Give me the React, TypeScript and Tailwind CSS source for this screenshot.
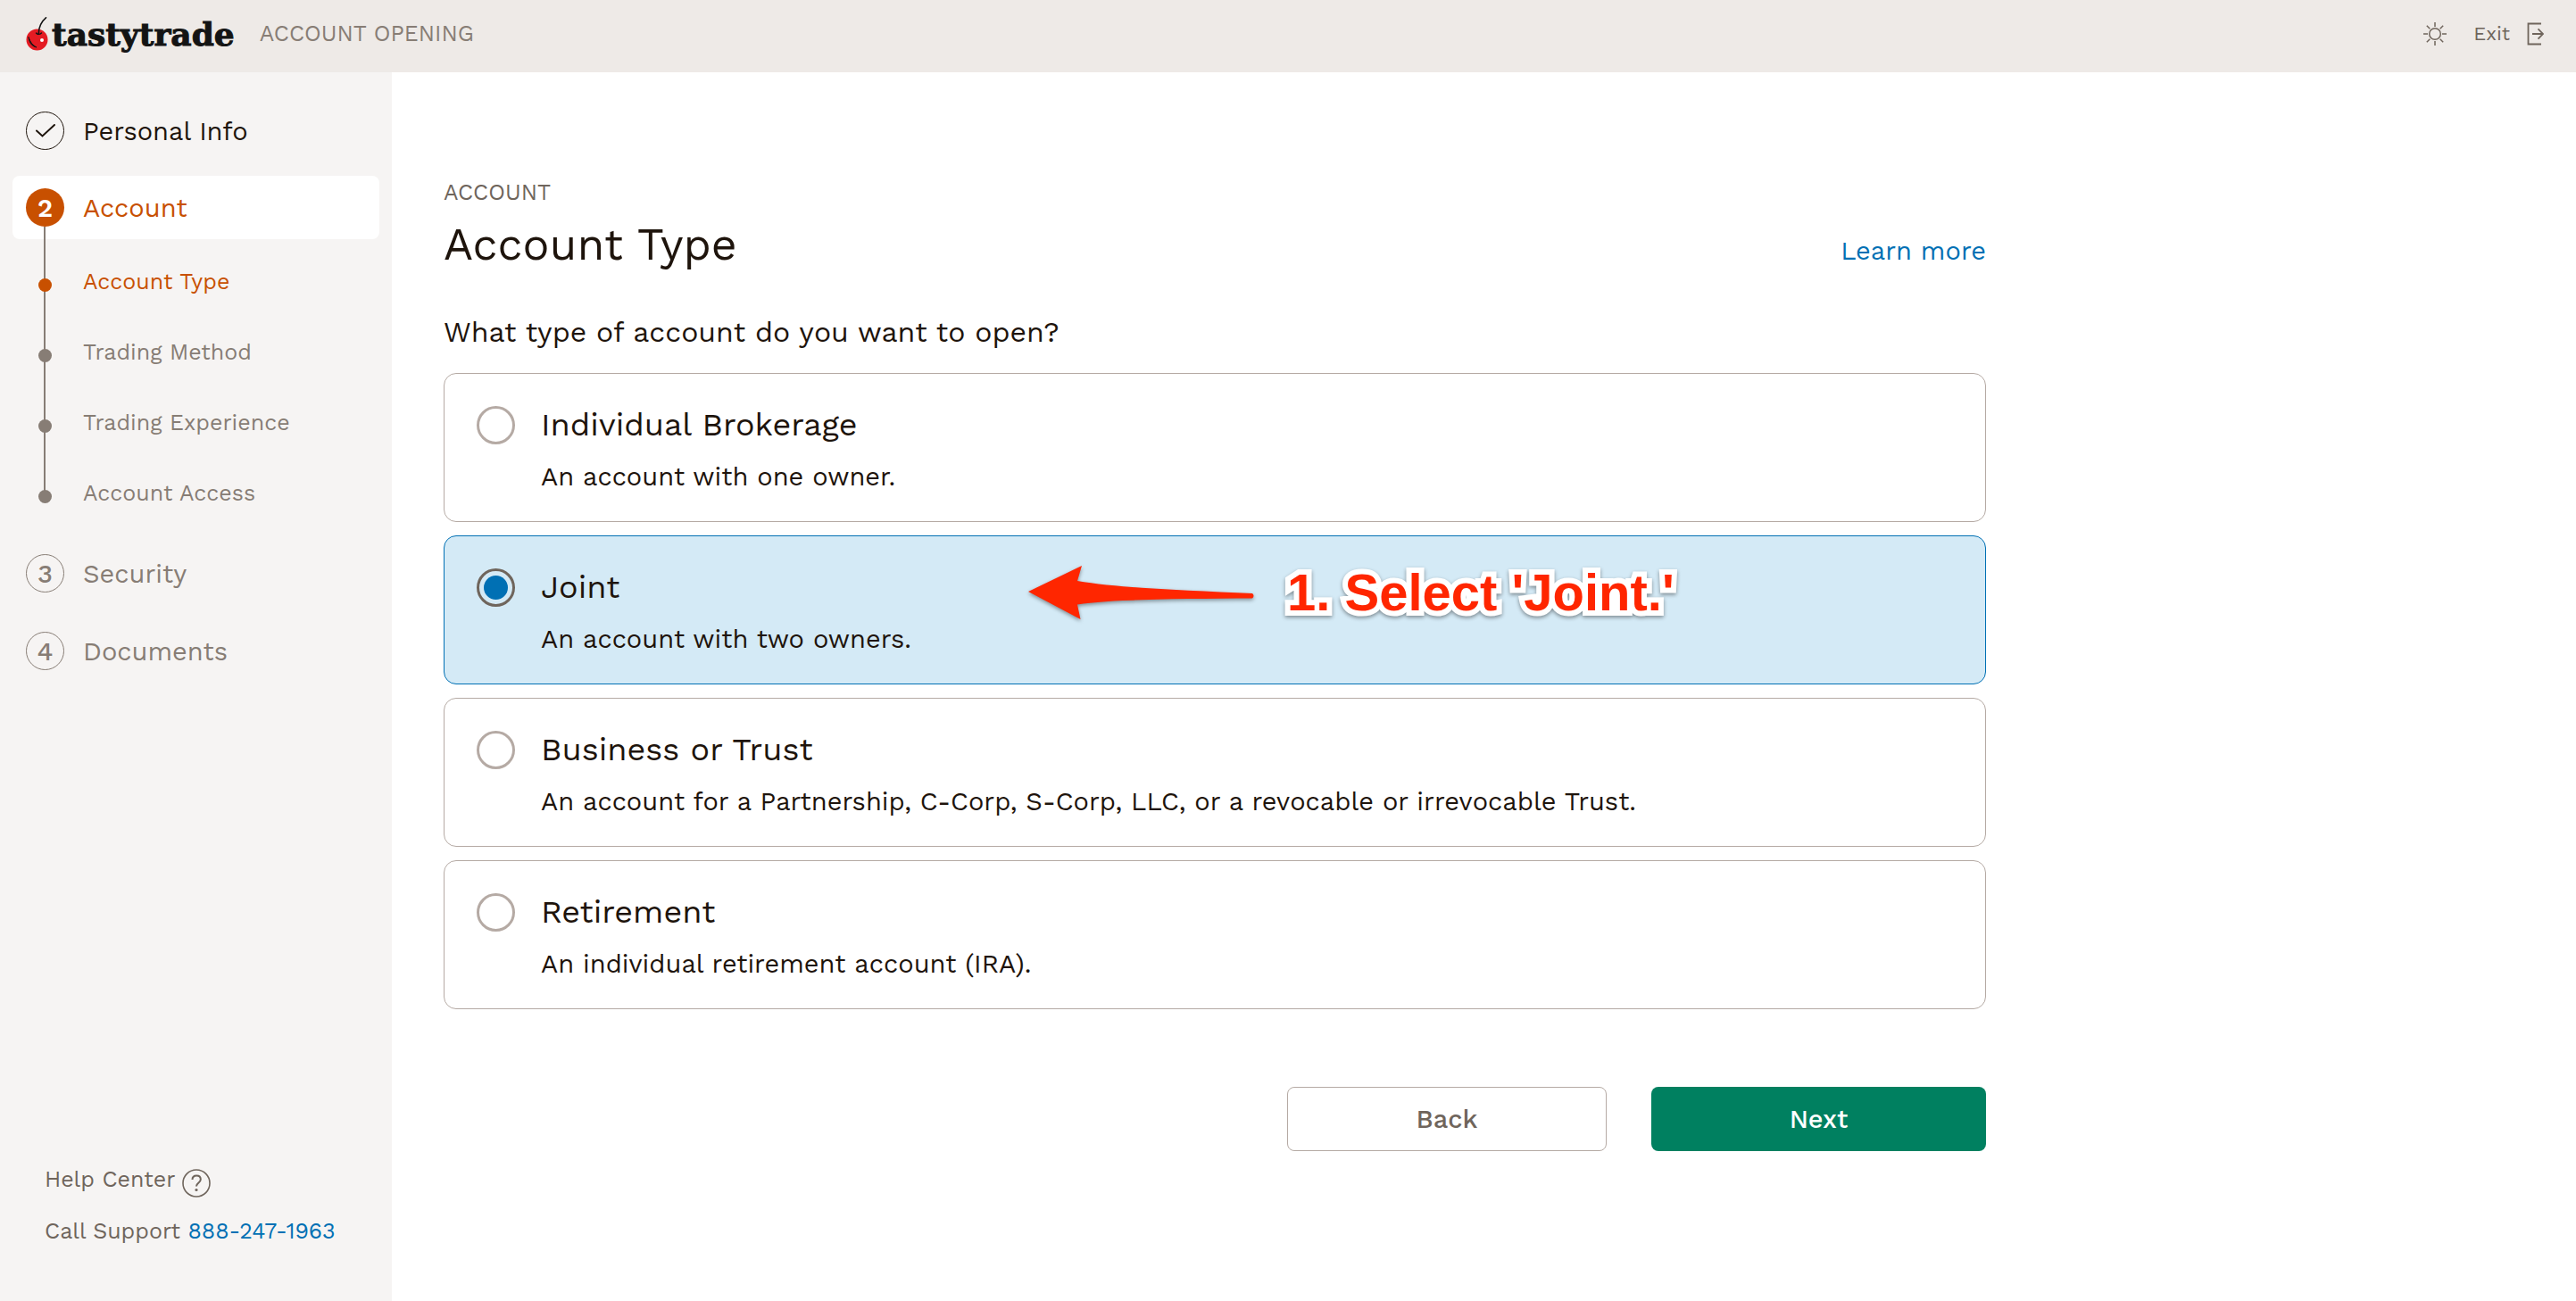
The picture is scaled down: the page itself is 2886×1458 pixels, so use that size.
import { useState } from "react";
import clsx from "clsx";

const accountTypes = [
  { id: "individual", title: "Individual Brokerage", description: "An account with one owner." },
  { id: "joint", title: "Joint", description: "An account with two owners." },
  {
    id: "business",
    title: "Business or Trust",
    description: "An account for a Partnership, C-Corp, S-Corp, LLC, or a revocable or irrevocable Trust.",
  },
  { id: "retirement", title: "Retirement", description: "An individual retirement account (IRA)." },
];

const subSteps = ["Account Type", "Trading Method", "Trading Experience", "Account Access"];

function CherryLogo() {
  return (
    <svg width="25" height="38" viewBox="0 0 25 38" className="shrink-0" aria-hidden="true">
      <circle cx="12.500" cy="25.500" r="12" fill="#e41b23" />
      <path d="M22.500 0.800C17.500 5 14.500 10 14.300 18.500" fill="none" stroke="#141414" strokeWidth="1.600" strokeLinecap="round" />
      <path d="M11.500 18C13 20 15.500 19.800 17.500 18" fill="none" stroke="#141414" strokeWidth="1.400" strokeLinecap="round" />
      <path d="M3 22.500C4 29.500 7 33 12 34C7.500 31.500 5 28.500 3 22.500Z" fill="#141414" stroke="#141414" />
      <circle cx="18" cy="26" r="2" fill="#fff" />
    </svg>
  );
}

function SunIcon() {
  return (
    <svg width="26" height="26" viewBox="0 0 26 26" fill="none" stroke="currentColor" strokeWidth="1.500" aria-hidden="true">
      <circle cx="13" cy="13" r="6.300" />
      <path d="M13 0V5M13 21V26M0 13H5M21 13H26M3.800 3.800L7.300 7.300M18.700 18.700L22.200 22.200M3.800 22.200L7.300 18.700M18.700 7.300L22.200 3.800" />
    </svg>
  );
}

function ExitIcon() {
  return (
    <svg width="19" height="26" viewBox="0 0 19 26" fill="none" stroke="currentColor" strokeWidth="1.800" aria-hidden="true">
      <path d="M16 1.500H1.500V24.500H16" />
      <path d="M6 13H18M12.500 7.300L18 13L12.500 18.700" />
    </svg>
  );
}

function Header() {
  return (
    <header className="flex h-[81px] items-center justify-between bg-[#eeeae7] pr-9 pb-1.5 pl-[29px]">
      <div className="flex items-center gap-7">
        <a href="#" className="flex items-center gap-1 font-['DejaVu_Serif',serif] text-[36px] leading-[38px] font-bold text-[#141414]">
          <CherryLogo />
          <span className="[-webkit-text-stroke:1px_#141414]">tastytrade</span>
        </a>
        <span className="text-[25px] leading-8 text-[#877d75]">ACCOUNT OPENING</span>
      </div>
      <div className="flex items-center gap-[30px] text-[#6f655c]">
        <button type="button" aria-label="Toggle theme">
          <SunIcon />
        </button>
        <a href="#" className="flex items-center gap-[19px] text-[22px] leading-8">
          Exit
          <ExitIcon />
        </a>
      </div>
    </header>
  );
}

type StepProps = {
  label: string;
  marker: string;
  state: "done" | "active" | "todo";
};

function Step({ label, marker, state }: StepProps) {
  return (
    <a
      href="#"
      className={clsx(
        "flex h-[71px] items-center gap-[21px] rounded-lg pl-[15px] text-[29px] leading-9 font-[450]",
        state === "done" && "text-[#1e140c]",
        state === "active" && "bg-white text-[#c85000]",
        state === "todo" && "text-[#877d75]"
      )}
    >
      <span
        className={clsx(
          "flex size-[43px] items-center justify-center rounded-full",
          state === "active" ? "bg-[#c85000] font-semibold text-white" : "border border-current font-medium"
        )}
      >
        {state === "done" ? (
          <svg width="22" height="15" viewBox="0 0 22 15" fill="none" stroke="currentColor" strokeWidth="2" strokeLinecap="round" aria-hidden="true">
            <path d="M1 7.500L7.500 13.500L21 1" />
          </svg>
        ) : (
          marker
        )}
      </span>
      {label}
    </a>
  );
}

function Sidebar() {
  return (
    <aside className="flex w-[439px] shrink-0 flex-col bg-[#f6f4f3] px-[14px] pt-[30px] pb-[49px]">
      <nav className="flex flex-col">
        <Step label="Personal Info" marker="1" state="done" />
        <div className="mt-[15px]">
          <Step label="Account" marker="2" state="active" />
        </div>
        <ul className="relative pt-2 pb-[15px]">
          {/* line joining the sub steps to the step circle */}
          <span className="absolute -top-[14px] bottom-12 left-[35px] w-[2px] bg-[#877d75]" />
          {subSteps.map((step, i) => (
            <li key={step}>
              <a
                href="#"
                className={clsx(
                  "relative flex h-[79px] items-center gap-[35px] pl-[29px] text-[25px] leading-8",
                  i === 0 ? "text-[#c85000]" : "text-[#877d75]"
                )}
              >
                <span className="mt-2 size-[15px] rounded-full bg-current" />
                {step}
              </a>
            </li>
          ))}
        </ul>
        <div className="flex flex-col gap-4">
          <Step label="Security" marker="3" state="todo" />
          <Step label="Documents" marker="4" state="todo" />
        </div>
      </nav>
      <div className="mt-auto pl-9 text-[25px] leading-[58px] text-[#6f655c]">
        <a href="#" className="flex items-center gap-2">
          Help Center
          <svg width="32" height="32" viewBox="0 0 32 32" fill="none" stroke="currentColor" strokeWidth="1.600" className="mt-2" aria-hidden="true">
            <circle cx="16" cy="16" r="15" />
            <path d="M11.500 12C11.500 9 13.500 7.500 16.200 7.500C19 7.500 20.800 9.300 20.800 11.800C20.800 15.500 16 15.500 16 19.500" strokeWidth="2" />
            <circle cx="16" cy="23.500" r="1.600" fill="currentColor" stroke="none" />
          </svg>
        </a>
        <p className="whitespace-nowrap">
          Call Support{" "}
          <a href="tel:8882471963" className="text-[#0070b4]">
            888-247-1963
          </a>
        </p>
      </div>
    </aside>
  );
}

function Callout() {
  return (
    <div className="pointer-events-none absolute top-8 left-[654px] flex items-center gap-9">
      <svg width="254" height="62" viewBox="0 0 254 62" className="drop-shadow-[0_2px_2px_rgba(0,0,0,0.4)]" aria-hidden="true">
        <path
          d="M0 30L60 1L55 18C100 26 180 29 251 32Q254 34.500 251 37.500C180 38 95 38 55 44.500L58.500 61Z"
          fill="#ff2600"
        />
      </svg>
      <span className="font-['Liberation_Sans',Arial,sans-serif] text-[58px] leading-[62px] font-bold whitespace-nowrap text-[#ff2600] drop-shadow-[0_2px_2px_rgba(0,0,0,0.4)] [-webkit-text-stroke:12px_white] [paint-order:stroke_fill] [stroke-linejoin:round]">
        1. Select 'Joint.'
      </span>
    </div>
  );
}

export default function App() {
  const [selected, setSelected] = useState("joint");

  return (
    <div className="flex min-h-screen flex-col bg-white font-['Work_Sans',Inter,sans-serif] text-[#1e140c]">
      <Header />
      <div className="flex flex-1">
        <Sidebar />
        <main className="flex-1 px-[58px] pt-[119px] pb-16">
          <form className="max-w-[1728px]" onSubmit={(e) => e.preventDefault()}>
            <p className="text-[25px] leading-8 text-[#6f655c]">ACCOUNT</p>
            <div className="mt-3 flex items-baseline justify-between">
              <h1 className="text-[50px] leading-[60px] font-[450]">Account Type</h1>
              <a href="#" className="text-[29px] leading-10 text-[#0070b4]">
                Learn more
              </a>
            </div>

            <fieldset className="mt-12">
              <legend className="text-[32px] leading-10">What type of account do you want to open?</legend>
              <div className="mt-[26px] flex flex-col gap-[15px]">
                {accountTypes.map(({ id, title, description }) => (
                  <label
                    key={id}
                    className={clsx(
                      "relative flex gap-[29px] rounded-[14px] border px-9 pt-9 pb-[30px]",
                      selected === id ? "border-[#0070b4] bg-[#d4eaf6]" : "border-[#b5aaa4]"
                    )}
                  >
                    <input
                      type="radio"
                      name="accountType"
                      value={id}
                      checked={selected === id}
                      onChange={() => setSelected(id)}
                      className="size-[43px] shrink-0 appearance-none rounded-full border-3 border-[#b5aaa4] bg-clip-content p-[5px] checked:border-[#6f655c] checked:bg-[#0070b4]"
                    />
                    <span className="flex flex-col gap-4">
                      <span className="text-[36px] leading-[43px] font-[450]">{title}</span>
                      <span className="text-[29px] leading-10">{description}</span>
                    </span>
                    {id === "joint" && <Callout />}
                  </label>
                ))}
              </div>
            </fieldset>

            <div className="mt-[87px] flex justify-end gap-[50px] text-[29px] leading-9 font-medium">
              <button type="button" className="h-[72px] w-[358px] rounded-lg border border-[#b5aaa4] text-[#6f655c]">
                Back
              </button>
              <button type="submit" className="h-[72px] w-[375px] rounded-lg bg-[#008060] text-white">
                Next
              </button>
            </div>
          </form>
        </main>
      </div>
    </div>
  );
}
